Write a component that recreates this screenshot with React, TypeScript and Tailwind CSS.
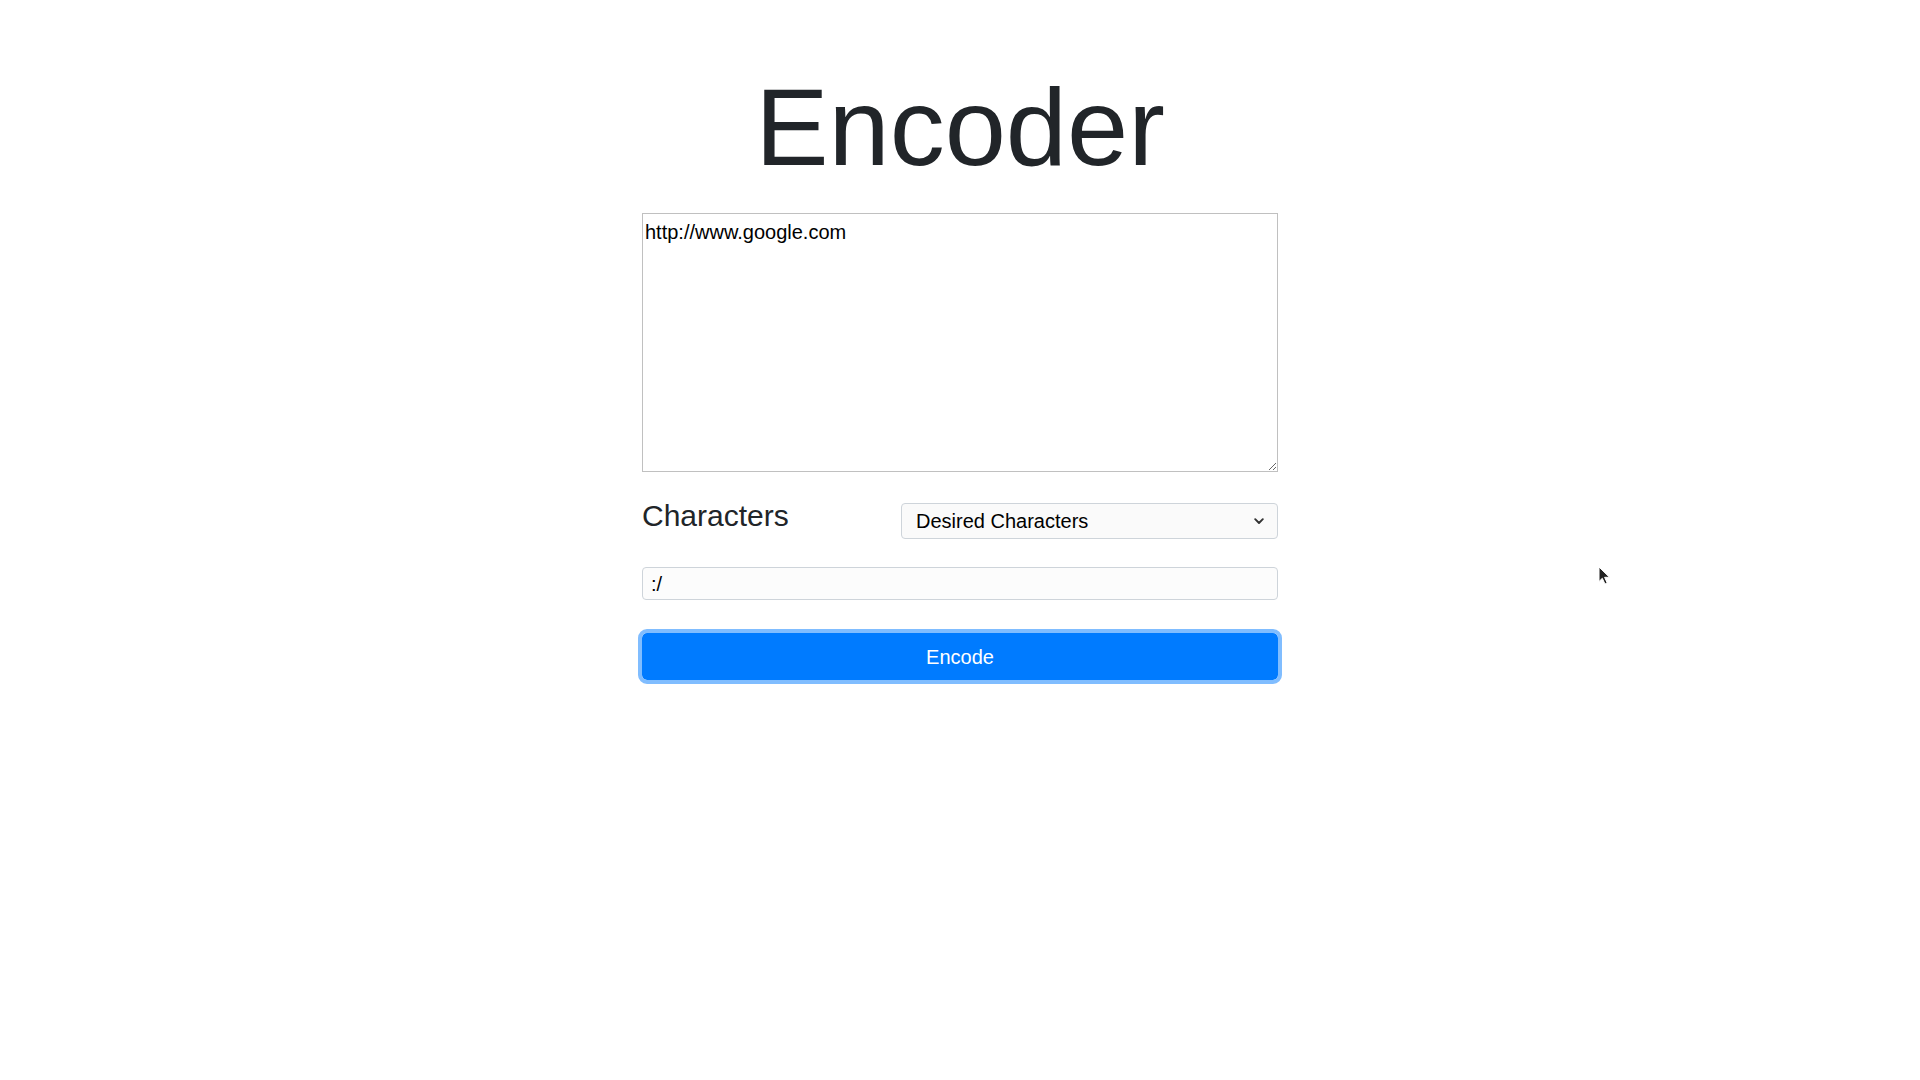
import React from "react";

const sans = { fontFamily: '"Liberation Sans", Arial, sans-serif' };

export default function App() {
  return (
    <div className="relative min-h-[1080px] w-full bg-white" style={sans}>
      <div className="flex flex-col items-center pt-[61px]">
        <h1 className="text-[110px] font-normal leading-[1.2] text-[#212529]">Encoder</h1>

        <div className="mt-[20px] flex w-[636px] flex-col">
          <textarea
            defaultValue="http://www.google.com"
            className="block h-[259px] w-full resize border border-[#c0c0c0] bg-white px-[2px] pb-[2px] pt-[3px] text-[20px] leading-[1.5] text-black outline-none"
            style={sans}
          />

          <div className="mt-[26px] flex items-start justify-between">
            <label className="text-[30px] leading-[1.2] text-[#212529]">Characters</label>
            <div className="mt-[5px] flex h-[36px] w-[377px] items-center justify-between rounded-[4px] border border-[#ced4da] bg-[#fafafa] pl-[14px] pr-[12px]">
              <span className="text-[20px] leading-[1.2] text-black">Desired Characters</span>
              <svg width="10" height="7" viewBox="0 0 10 7" className="mr-[1px]">
                <path d="M1.2 1.2 L5 5 L8.8 1.2" fill="none" stroke="#333" strokeWidth="1.9" strokeLinecap="round" strokeLinejoin="round" />
              </svg>
            </div>
          </div>

          <div className="mt-[28px] flex h-[33px] w-full items-center rounded-[4px] border border-[#ced4da] bg-[#fcfcfc] pl-[8px]">
            <span className="text-[20px] leading-[1.2] text-black">:/</span>
          </div>

          <button
            type="button"
            className="mt-[33px] h-[47px] w-full rounded-[5px] bg-[#007bff] text-[20px] leading-[1.2] text-white outline-[4px] outline-solid outline-[#80bdff]"
            style={sans}
          >
            Encode
          </button>
        </div>
      </div>

      {/* mouse pointer */}
      <svg
        className="absolute left-[1598px] top-[566px]"
        width="13"
        height="20"
        viewBox="0 0 13 20"
      >
        <path d="M1 1 L1 15.5 L4.3 12.3 L7 18 L9.2 17 L6.6 11.3 L11.5 11.3 Z" fill="#222" stroke="#fff" strokeWidth="1" strokeLinejoin="round" />
      </svg>
    </div>
  );
}
